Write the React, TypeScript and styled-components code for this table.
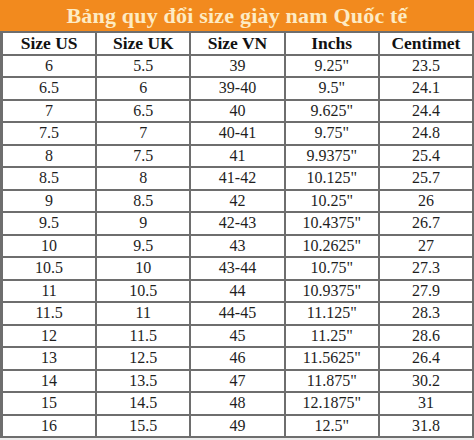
import React from 'react';
import styled, { createGlobalStyle } from 'styled-components';

const GlobalStyle = createGlobalStyle`
	html, body {
		margin: 0;
		padding: 0;
		background: #ececec;
	}
`;

const serif = `"Liberation Serif", "Times New Roman", serif`;

const headers = ['Size US', 'Size UK', 'Size VN', 'Inchs', 'Centimet'];

const rows: string[][] = [
	['6', '5.5', '39', '9.25"', '23.5'],
	['6.5', '6', '39-40', '9.5"', '24.1'],
	['7', '6.5', '40', '9.625"', '24.4'],
	['7.5', '7', '40-41', '9.75"', '24.8'],
	['8', '7.5', '41', '9.9375"', '25.4'],
	['8.5', '8', '41-42', '10.125"', '25.7'],
	['9', '8.5', '42', '10.25"', '26'],
	['9.5', '9', '42-43', '10.4375"', '26.7'],
	['10', '9.5', '43', '10.2625"', '27'],
	['10.5', '10', '43-44', '10.75"', '27.3'],
	['11', '10.5', '44', '10.9375"', '27.9'],
	['11.5', '11', '44-45', '11.125"', '28.3'],
	['12', '11.5', '45', '11.25"', '28.6'],
	['13', '12.5', '46', '11.5625"', '26.4'],
	['14', '13.5', '47', '11.875"', '30.2'],
	['15', '14.5', '48', '12.1875"', '31'],
	['16', '15.5', '49', '12.5"', '31.8'],
];

const Page = styled.div`
	width: 474px;
	height: 440px;
	display: flex;
	flex-direction: column;
	background: #ececec;
	font-family: ${serif};
`;

const Title = styled.div`
	height: 31px;
	flex: none;
	background: #f28a1e;
	color: #fdebc4;
	font-weight: bold;
	font-size: 22px;
	line-height: 31px;
	text-align: center;
	letter-spacing: 0.2px;
`;

const Grid = styled.div`
	height: 407px;
	flex: none;
	display: grid;
	grid-template-columns: repeat(5, 1fr);
	grid-template-rows: repeat(18, 1fr);
	gap: 2px;
	padding: 2px 2px 2px 3px;
	box-sizing: border-box;
	background: #6e6e6e;
`;

const Cell = styled.div<{ $head?: boolean }>`
	background: #ffffff;
	display: flex;
	align-items: center;
	justify-content: center;
	color: ${(p) => (p.$head ? '#111111' : '#1e1e1e')};
	font-weight: ${(p) => (p.$head ? 'bold' : 'normal')};
	font-size: ${(p) => (p.$head ? '17.5px' : '16px')};
	line-height: 1;
	white-space: nowrap;
`;

export default function App() {
	return (
		<Page>
			<GlobalStyle />
			<Title>Bảng quy đổi size giày nam Quốc tế</Title>
			<Grid>
				{headers.map((h) => (
					<Cell key={h} $head>
						{h}
					</Cell>
				))}
				{rows.map((r, i) =>
					r.map((v, j) => <Cell key={`${i}-${j}`}>{v}</Cell>)
				)}
			</Grid>
		</Page>
	);
}
